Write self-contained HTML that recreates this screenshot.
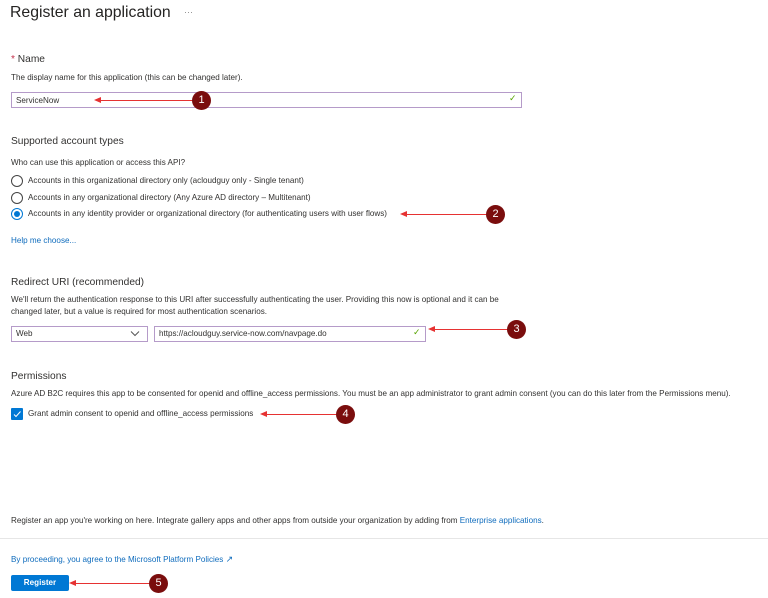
<!DOCTYPE html>
<html><head><style>
*{margin:0;padding:0;box-sizing:border-box}
body{width:768px;height:598px;background:#fff;font-family:"Liberation Sans",sans-serif;color:#323130;position:relative;overflow:hidden}
.a{position:absolute;white-space:nowrap}
.s{font-size:8.1px;color:#323130}
.h{font-size:10.2px;color:#323130}
.box{position:absolute;border:1px solid #b59bc9;background:#fff}
.rad{position:absolute;width:12px;height:12px;border:1px solid #444;border-radius:50%}
.ln{position:absolute;height:1px;background:#e63232}
.hd{position:absolute;width:0;height:0;border-top:3px solid transparent;border-bottom:3px solid transparent;border-right:7px solid #e63232}
.c{position:absolute;width:19px;height:19px;border-radius:50%;background:#7a0d0d;color:#fff;font-size:11px;text-align:center;line-height:19px}
.bl{color:#0f6cbd}
</style></head><body>
<div class="a" style="left:10px;top:4px;font-size:15.8px;color:#252423">Register an application</div>
<div class="a" style="left:184px;top:7px;font-size:9px;color:#888">···</div>

<div class="a h" style="left:11px;top:54px"><span style="color:#c4314b">*</span> Name</div>
<div class="a s" style="left:11px;top:73px">The display name for this application (this can be changed later).</div>
<div class="box" style="left:11px;top:92px;width:511px;height:16px"></div>
<div class="a s" style="left:16px;top:96px">ServiceNow</div>
<div class="a" style="left:509px;top:93px;font-size:9px;color:#57a300">✓</div>
<div class="hd" style="left:94px;top:97px"></div><div class="ln" style="left:100px;top:100px;width:94px"></div>
<div class="c" style="left:192px;top:91px">1</div>

<div class="a h" style="left:11px;top:136px">Supported account types</div>
<div class="a s" style="left:11px;top:158px">Who can use this application or access this API?</div>
<div class="rad" style="left:11px;top:175px"></div>
<div class="a s" style="left:28px;top:176px">Accounts in this organizational directory only (acloudguy only - Single tenant)</div>
<div class="rad" style="left:11px;top:192px"></div>
<div class="a s" style="left:28px;top:193px">Accounts in any organizational directory (Any Azure AD directory – Multitenant)</div>
<div class="rad" style="left:11px;top:208px;border-color:#0078d4"></div>
<div class="a" style="left:14px;top:211px;width:6px;height:6px;border-radius:50%;background:#0078d4"></div>
<div class="a s" style="left:28px;top:209px">Accounts in any identity provider or organizational directory (for authenticating users with user flows)</div>
<div class="hd" style="left:400px;top:211px"></div><div class="ln" style="left:406px;top:214px;width:82px"></div>
<div class="c" style="left:486px;top:205px">2</div>
<div class="a s bl" style="left:11px;top:236px">Help me choose...</div>

<div class="a h" style="left:11px;top:277px">Redirect URI (recommended)</div>
<div class="a s" style="left:11px;top:295px">We'll return the authentication response to this URI after successfully authenticating the user. Providing this now is optional and it can be</div>
<div class="a s" style="left:11px;top:307px">changed later, but a value is required for most authentication scenarios.</div>
<div class="box" style="left:11px;top:326px;width:137px;height:16px"></div>
<div class="a s" style="left:16px;top:329px">Web</div>
<svg class="a" style="left:130px;top:330px" width="10" height="7"><path d="M1 1.5L5 5.5L9 1.5" fill="none" stroke="#555" stroke-width="1"/></svg>
<div class="box" style="left:154px;top:326px;width:272px;height:16px"></div>
<div class="a s" style="left:159px;top:329px">https://acloudguy.service-now.com/navpage.do</div>
<div class="a" style="left:413px;top:327px;font-size:9px;color:#57a300">✓</div>
<div class="hd" style="left:428px;top:326px"></div><div class="ln" style="left:434px;top:329px;width:76px"></div>
<div class="c" style="left:507px;top:320px">3</div>

<div class="a h" style="left:11px;top:371px">Permissions</div>
<div class="a s" style="left:11px;top:389px">Azure AD B2C requires this app to be consented for openid and offline_access permissions. You must be an app administrator to grant admin consent (you can do this later from the Permissions menu).</div>
<div class="a" style="left:11px;top:408px;width:12px;height:12px;background:#0078d4;border-radius:1px"></div>
<svg class="a" style="left:12px;top:409px" width="10" height="10"><path d="M2 5.5L4 7.5L8.5 2.5" fill="none" stroke="#fff" stroke-width="1"/></svg>
<div class="a s" style="left:28px;top:409px">Grant admin consent to openid and offline_access permissions</div>
<div class="hd" style="left:260px;top:411px"></div><div class="ln" style="left:266px;top:414px;width:72px"></div>
<div class="c" style="left:336px;top:405px">4</div>

<div class="a s" style="left:11px;top:516px">Register an app you're working on here. Integrate gallery apps and other apps from outside your organization by adding from <span class="bl">Enterprise applications</span>.</div>
<div class="a" style="left:0;top:538px;width:768px;height:1px;background:#e6e6e6"></div>
<div class="a s bl" style="left:11px;top:554px">By proceeding, you agree to the Microsoft Platform Policies <span style="font-size:9px">↗</span></div>
<div class="a" style="left:11px;top:575px;width:58px;height:16px;background:#0078d4;border-radius:2px;color:#fff;font-size:8.1px;font-weight:bold;text-align:center;line-height:16px">Register</div>
<div class="hd" style="left:69px;top:580px"></div><div class="ln" style="left:75px;top:583px;width:75px"></div>
<div class="c" style="left:149px;top:574px">5</div>
</body></html>
